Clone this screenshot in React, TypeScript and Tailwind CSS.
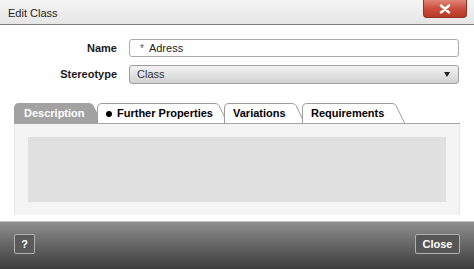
import React from "react";

function Tab({
  label,
  width,
  active,
  bullet,
  className,
}: {
  label: string;
  width: number;
  active?: boolean;
  bullet?: boolean;
  className?: string;
}) {
  const w = width;
  const h = 20;
  const d = `M0.5,${h} L0.5,5 Q0.5,0.5 5,0.5 L${w - 13},0.5 Q${w - 10},0.5 ${w - 9},2.5 L${w - 0.5},${h}`;
  return (
    <div className={`relative h-[20px] shrink-0 ${className ?? ""}`} style={{ width: w }}>
      <svg className="absolute inset-0" width={w} height={h} viewBox={`0 0 ${w} ${h}`}>
        <path d={d} fill={active ? "#a2a2a2" : "#ffffff"} stroke={active ? "#a2a2a2" : "#9c9c9c"} strokeWidth="1" />
      </svg>
      <div
        className={`relative flex h-full items-center pt-[1px] text-[11px] font-bold ${
          active ? "pl-[10px] text-white" : "pl-[9px] text-black"
        }`}
      >
        {bullet && <span className="mr-[5px] inline-block h-[6px] w-[6px] rounded-full bg-black" />}
        {label}
      </div>
    </div>
  );
}

export default function App() {
  return (
    <div className="flex h-[269px] w-[474px] flex-col overflow-hidden bg-white font-['Liberation_Sans',Arial,sans-serif]">
      {/* Title bar */}
      <div className="flex h-[25px] shrink-0 items-start justify-between border-b border-[#7c7c7c] bg-gradient-to-b from-[#f4f4f4] to-[#e6e6e6]">
        <div className="pl-[8px] pt-[5px] text-[11px] text-[#1e1e1e]">Edit Class</div>
        <div className="mr-[7px] flex h-[18px] w-[44px] items-center justify-center rounded-b-[4px] border border-t-0 border-[#8e3326] bg-gradient-to-b from-[#e08576] via-[#cc4d3b] to-[#b63a26]">
          <svg width="12" height="10" viewBox="0 0 12 10">
            <path d="M2,1.5 L10,8.5 M10,1.5 L2,8.5" stroke="#ffffff" strokeWidth="2.4" strokeLinecap="round" />
          </svg>
        </div>
      </div>

      {/* Body */}
      <div className="flex h-[196px] shrink-0 flex-col pt-[14px]">
        <div className="flex items-center">
          <div className="w-[117px] text-right text-[11px] font-bold text-[#1a1a1a]">Name</div>
          <div className="ml-[12px] flex h-[18px] w-[330px] items-center rounded-[3px] border border-[#ababab] bg-white pl-[10px] text-[11px] text-[#222]">
            <span className="mr-[5px] text-[10px] text-[#555]">*</span>
            Adress
          </div>
        </div>
        <div className="mt-[8px] flex items-center">
          <div className="w-[117px] text-right text-[11px] font-bold text-[#1a1a1a]">Stereotype</div>
          <div className="ml-[12px] flex h-[19px] w-[330px] items-center justify-between rounded-[3px] border border-[#9e9e9e] bg-gradient-to-b from-[#f3f3f3] to-[#d2d2d2] pl-[7px] pr-[8px] text-[11px] text-[#333]">
            <span>Class</span>
            <svg width="6" height="5" viewBox="0 0 6 5">
              <path d="M0,0 L6,0 L3,5 Z" fill="#222" />
            </svg>
          </div>
        </div>

        {/* Tabs */}
        <div className="mt-[19px] px-[14px]">
          <div className="flex items-end border-b border-[#a6a6a6]">
            <Tab label="Description" width={88} active />
            <Tab label="Further Properties" width={131} bullet className="-ml-[5px]" />
            <Tab label="Variations" width={81} className="-ml-[4px]" />
            <Tab label="Requirements" width={103} className="-ml-[3px]" />
          </div>
          <div className="h-[91px] border-x border-[#e6e6e6] bg-[#f4f4f4] px-[13px] pt-[13px]">
            <div className="h-[65px] bg-[#e0e0e0]" />
          </div>
        </div>
      </div>

      {/* Footer */}
      <div className="flex flex-1 items-center justify-between border-t border-[#c4c4c4] bg-gradient-to-b from-[#8f8f8f] to-[#3d3d3d] px-[14px] pb-[3px]">
        <div className="flex h-[20px] w-[21px] items-center justify-center rounded-[2px] border border-[#b0b0b0] bg-[#5a5a5a] text-[11px] font-bold text-white">
          ?
        </div>
        <div className="flex h-[20px] w-[45px] items-center justify-center rounded-[2px] border border-[#b0b0b0] bg-[#565656] text-[11px] font-bold text-white">
          Close
        </div>
      </div>
    </div>
  );
}
